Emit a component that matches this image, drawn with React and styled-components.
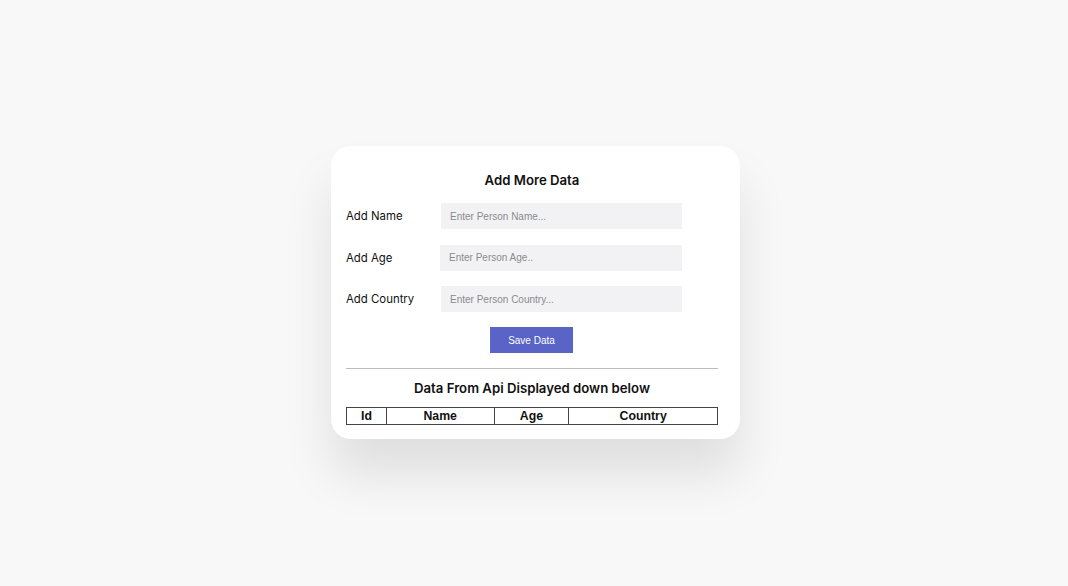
import React from "react";
import styled, { createGlobalStyle } from "styled-components";

const Global = createGlobalStyle`
  html, body { margin: 0; padding: 0; background: #f8f8f8; }
  body { font-family: Inter, "Liberation Sans", Arial, sans-serif; }
  * { box-sizing: border-box; }
`;

const Page = styled.div`
  width: 1068px;
  height: 586px;
  display: flex;
  justify-content: center;
  align-items: flex-start;
  padding-top: 146px;
  padding-left: 3px;
`;

const Card = styled.div`
  width: 409px;
  background: #ffffff;
  border-radius: 20px;
  padding: 26px 22px 14px 15px;
  box-shadow: 0 36px 50px rgba(0, 0, 0, 0.1);
  display: flex;
  flex-direction: column;
`;

const Heading = styled.h2`
  margin: 0;
  width: 372px;
  font-family: Inter, sans-serif;
  font-size: 13.2px;
  font-weight: 600;
  color: #111;
  text-align: center;
  line-height: 17px;
`;

const Form = styled.div`
  display: flex;
  flex-direction: column;
  gap: 15.5px;
  margin-top: 14px;
`;

const Row = styled.div`
  display: grid;
  grid-template-columns: 95px 241px;
  align-items: center;
`;

const Label = styled.label`
  font-family: Inter, sans-serif;
  font-size: 11.4px;
  color: #111;
`;

const Input = styled.input`
  height: 26px;
  border: none;
  outline: none;
  background: #f2f2f4;
  padding: 0 9px;
  font-family: "Liberation Sans", Arial, sans-serif;
  font-size: 10px;
  color: #333;
  margin-left: ${(p) => p.$shift || 0}px;
  &::placeholder { color: #8a8a8e; }
`;

const Button = styled.button`
  align-self: center;
  margin: 15px 0 0 -1px;
  width: 83px;
  height: 26px;
  border: none;
  background: #5964c6;
  color: #fff;
  font-family: "Liberation Sans", Arial, sans-serif;
  font-size: 10px;
  cursor: pointer;
`;

const Divider = styled.hr`
  margin: 15px 0 0;
  border: none;
  border-top: 1px solid #bcbcbc;
  width: 372px;
`;

const SubHeading = styled(Heading)`
  margin-top: 11px;
`;

const Table = styled.table`
  width: 372px;
  margin-top: 10px;
  border-collapse: collapse;
  font-family: "Liberation Sans", Arial, sans-serif;
`;

const Th = styled.th`
  border: 1px solid #444;
  font-size: 12.3px;
  font-weight: 700;
  color: #111;
  height: 17px;
  padding: 0;
  line-height: 15px;
  width: ${(p) => p.$w}px;
`;

export default function App() {
  return (
    <>
      <Global />
      <Page>
        <Card>
          <Heading>Add More Data</Heading>
          <Form>
            <Row>
              <Label>Add Name</Label>
              <Input placeholder="Enter Person Name..." />
            </Row>
            <Row>
              <Label>Add Age</Label>
              <Input $shift={-1} placeholder="Enter Person Age.." />
            </Row>
            <Row>
              <Label>Add Country</Label>
              <Input placeholder="Enter Person Country..." />
            </Row>
          </Form>
          <Button>Save Data</Button>
          <Divider />
          <SubHeading>Data From Api Displayed down below</SubHeading>
          <Table>
            <thead>
              <tr>
                <Th $w={40}>Id</Th>
                <Th $w={108}>Name</Th>
                <Th $w={75}>Age</Th>
                <Th $w={149}>Country</Th>
              </tr>
            </thead>
          </Table>
        </Card>
      </Page>
    </>
  );
}
